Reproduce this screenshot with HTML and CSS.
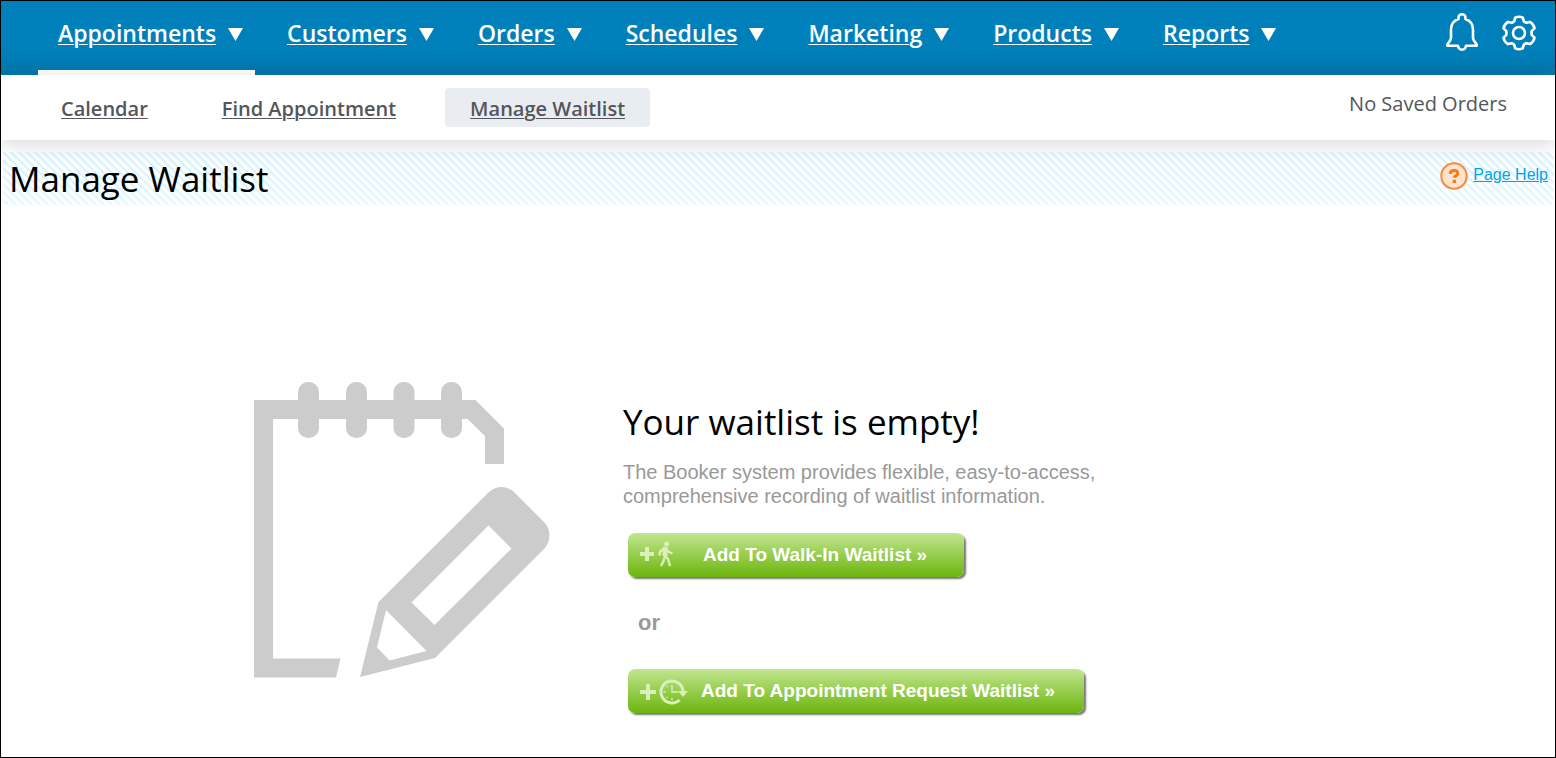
FILE: index.html
```html
<!DOCTYPE html>
<html lang="en">
<head>
<meta charset="utf-8">
<title>Manage Waitlist</title>
<link rel="stylesheet" href="styles.css">
</head>
<body>
<div class="frame">
  <header class="topbar">
    <nav aria-label="Main">
      <ul class="menu">
        <li class="menu-item active"><a href="#">Appointments</a><svg class="caret" viewBox="0 0 15 13"><path d="M0 0h15L7.500 13z"/></svg></li>
        <li class="menu-item"><a href="#">Customers</a><svg class="caret" viewBox="0 0 15 13"><path d="M0 0h15L7.500 13z"/></svg></li>
        <li class="menu-item"><a href="#">Orders</a><svg class="caret" viewBox="0 0 15 13"><path d="M0 0h15L7.500 13z"/></svg></li>
        <li class="menu-item"><a href="#">Schedules</a><svg class="caret" viewBox="0 0 15 13"><path d="M0 0h15L7.500 13z"/></svg></li>
        <li class="menu-item"><a href="#">Marketing</a><svg class="caret" viewBox="0 0 15 13"><path d="M0 0h15L7.500 13z"/></svg></li>
        <li class="menu-item"><a href="#">Products</a><svg class="caret" viewBox="0 0 15 13"><path d="M0 0h15L7.500 13z"/></svg></li>
        <li class="menu-item"><a href="#">Reports</a><svg class="caret" viewBox="0 0 15 13"><path d="M0 0h15L7.500 13z"/></svg></li>
      </ul>
    </nav>
    <div class="tools">
      <button class="tool" type="button" aria-label="Notifications">
        <svg width="34" height="40" viewBox="0 -1 34 40"><path d="M13.500 6V4.700a3.500 3.500 0 0 1 7 0V6c4.500 1.600 7.500 5.500 7.500 10.500V25c0 1.200.5 2 1.400 3.200l2.200 3v1.500H21c-.3 2.400-1.800 4-4 4s-3.700-1.600-4-4H2.400v-1.500l2.200-3C5.500 27 6 26.200 6 25v-8.500c0-5 3-8.900 7.500-10.500z"/></svg>
      </button>
      <button class="tool" type="button" aria-label="Settings">
        <svg width="36" height="40" viewBox="0 0 36 40"><path d="M14.200 5.600Q18 3.800 21.800 5.600L22.800 9.400L25.200 10.800L29 9.900Q32.800 12.300 33.500 16.300L30.600 19.200V22.800L33.500 25.700Q32.800 29.700 29 32.100L25.200 31.200L22.800 32.600L21.800 36.400Q18 38.200 14.200 36.400L13.200 32.600L10.800 31.200L7 32.100Q3.200 29.700 2.500 25.700L5.400 22.800V19.200L2.500 16.300Q3.200 12.300 7 9.900L10.800 10.800L13.200 9.400z"/><circle cx="18" cy="21" r="6"/></svg>
      </button>
    </div>
  </header>
  <div class="subbar">
    <nav aria-label="Appointments">
      <ul class="submenu">
        <li><a class="sublink" href="#">Calendar</a></li>
        <li><a class="sublink" href="#">Find Appointment</a></li>
        <li><a class="sublink current" href="#" aria-current="page">Manage Waitlist</a></li>
      </ul>
    </nav>
    <span class="saved">No Saved Orders</span>
  </div>
  <div class="titlebar">
    <h1>Manage Waitlist</h1>
    <a class="help" href="#">
      <svg width="28" height="28" viewBox="0 0 28 28"><circle cx="14" cy="14" r="12.700" fill="#fce3d0" stroke="#fb8b3c" stroke-width="2"/><path d="M10.300 12c0-2.500 1.500-3.500 3.700-3.500s3.800 1 3.800 3c0 2.200-3.400 2-3.400 4.300" fill="none" stroke="#fb7a10" stroke-width="3"/><path d="M12.700 17.800h3.400v3.200h-3.400z" fill="#fb7a10"/></svg>
      <span>Page Help</span>
    </a>
  </div>
  <main class="empty">
    <svg class="notepad" width="296" height="296" viewBox="0 0 296 296">
      <path d="M0 18H221.500L250 46.500V82H231V54L213.500 37H19V276.500H86.500L82 295.500H0z"/>
      <rect x="44" y="0" width="21" height="56" rx="10"/><rect x="92" y="0" width="21" height="56" rx="10"/><rect x="139.500" y="0" width="21" height="56" rx="10"/><rect x="187" y="0" width="21" height="56" rx="10"/>
      <path fill-rule="evenodd" d="M106 295L124.500 220L235 110Q247.500 100 260 110L291 141Q300 153 291 166L181 276zM157.500 220.500L234.500 143.500L257.500 166.500L180.500 243zM132 228L123 265.500L135.500 278.500L172.500 269z"/>
    </svg>
    <section class="message">
      <h2>Your waitlist is empty!</h2>
      <p class="intro">The Booker system provides flexible, easy-to-access,<br>comprehensive recording of waitlist information.</p>
      <div class="actions">
        <button class="add walkin" type="button">
          <svg width="52" height="28" viewBox="0 0 52 28"><path d="M0 13h14M7 6v14" stroke-width="4"/><circle class="solid" cx="26.500" cy="3" r="2.500"/><path d="M25 7v8l3 3 2 7M25 15l-1.500 5-2.500 5M24 7.500l-4 3-.5 4M26 8l3 3 3.500 1.500" stroke-width="2.400"/><path d="M25 6v9" stroke-width="5"/></svg>
          Add To Walk-In Waitlist »
        </button>
        <p class="or">or</p>
        <button class="add request" type="button">
          <svg width="52" height="28" viewBox="0 0 52 28"><path d="M0 15h16M8 7v16" stroke-width="4"/><path d="M39.500 23A11 11 0 1 1 43 15" stroke-width="3"/><path class="solid" d="M38 14h10l-5 6z"/><path d="M32 8v7h6M23.500 15h2M32 21v2M26.500 9l1 1M26.500 21l1-1" stroke-width="1.500"/></svg>
          Add To Appointment Request Waitlist »
        </button>
      </div>
    </section>
  </main>
</div>
</body>
</html>
```
FILE: styles.css
```css
* { box-sizing: border-box; }
body { margin: 0; background: #fff; font-family: "Liberation Sans", Arial, sans-serif; }
ul { list-style: none; margin: 0; padding: 0; }
h1, h2, p { margin: 0; }
button { border: 0; background: none; padding: 0; cursor: pointer; }

.frame { min-height: 100vh; border: 1px solid #000; }

.topbar {
  display: flex;
  justify-content: space-between;
  height: 74px;
  padding: 0 18px 0 37px;
  background: linear-gradient(#0080ba 60%, #0078ae);
}
.menu { display: flex; gap: 12px; height: 74px; }
.menu-item {
  display: flex;
  align-items: flex-start;
  padding: 16px 12px 0 20px;
  font: 600 23px/32px "Open Sans", sans-serif;
}
.menu-item a { color: #fff; text-decoration-thickness: 1px; text-underline-offset: 2px; }
.active { border-bottom: 5px solid #fff; }
.caret { width: 15px; height: 13px; margin: 11px 0 0 12px; fill: #fff; }
.tools { display: flex; gap: 22px; align-items: flex-start; padding-top: 11px; }
.tool svg { display: block; fill: none; stroke: #fff; stroke-width: 2.6; stroke-linejoin: round; }

.subbar {
  position: relative;
  display: flex;
  justify-content: space-between;
  padding: 13px 48px 13px 35px;
  background: #fff;
  box-shadow: 0 4px 20px rgba(0, 0, 0, 0.16);
}
.submenu { display: flex; gap: 24px; }
.sublink {
  display: block;
  padding: 2px 25px 0;
  border-radius: 4px;
  color: #54565b;
  font: 600 20px/37px "Open Sans", sans-serif;
  text-decoration-thickness: 1px;
  text-underline-offset: 2px;
}
.current { background: #e9edf2; }
.saved { color: #54565b; font: 20px/32px "Open Sans", sans-serif; }

.titlebar {
  display: flex;
  justify-content: space-between;
  align-items: flex-start;
  margin: 12px 1px 0 2px;
  padding: 0 6px;
  height: 53px;
  background:
    linear-gradient(rgba(255, 255, 255, 0) 40%, rgba(255, 255, 255, 0.3)),
    linear-gradient(45deg, #ddf3fb 0 12%, #fcfeff 12% 38%, #ddf3fb 38% 62%, #fcfeff 62% 88%, #ddf3fb 88%) 0 0 / 8px 8px;
}
h1, h2 { font: 35px/54px "Open Sans", sans-serif; color: #000; }
.help { display: flex; gap: 5px; padding-top: 10px; color: #00a4e8; font-size: 16px; line-height: 25px; }

.empty { display: flex; gap: 73px; padding: 177px 24px 40px 253px; }
.notepad { flex: none; fill: #ccc; }
.message { padding-top: 13px; }
.intro { padding-top: 11px; color: #999; font-size: 20px; line-height: 24px; }
.actions { display: flex; flex-direction: column; align-items: flex-start; padding: 25px 5px 0; }
.add {
  display: flex;
  align-items: center;
  height: 44px;
  border-radius: 7px;
  background: linear-gradient(#c1e68f, #6cb50d);
  box-shadow: 2px 2px 2px #777;
  color: #fff;
  font: bold 19px/24px "Liberation Sans", Arial, sans-serif;
}
.add svg { fill: none; stroke: #d9f0bb; }
.add .solid { fill: #d9f0bb; stroke: none; }
.walkin { gap: 11px; padding: 0 37px 0 12px; }
.request { gap: 9px; padding: 0 29px 0 12px; }
.or { padding: 34px 10px; color: #999; font-size: 22px; font-weight: bold; line-height: 24px; }
```
